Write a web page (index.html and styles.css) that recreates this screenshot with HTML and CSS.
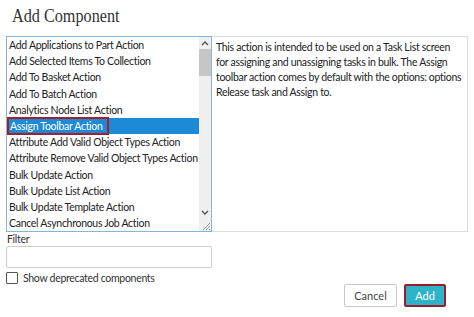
FILE: index.html
```html
<!DOCTYPE html>
<html lang="en">
<head>
    <meta charset="UTF-8">
    <meta name="viewport" content="width=device-width, initial-scale=1.0">
    <title>Add Component</title>
    <link rel="stylesheet" href="styles.css">
</head>
<body>
    <div class="dialog">
        <h1>Add Component</h1>
        <div class="picker">
            <div class="listbox">
                <ul class="items">
                    <li>Add Applications to Part Action</li>
                    <li>Add Selected Items To Collection</li>
                    <li>Add To Basket Action</li>
                    <li>Add To Batch Action</li>
                    <li>Analytics Node List Action</li>
                    <li class="selected"><span class="mark">Assign Toolbar Action</span></li>
                    <li>Attribute Add Valid Object Types Action</li>
                    <li>Attribute Remove Valid Object Types Action</li>
                    <li>Bulk Update Action</li>
                    <li>Bulk Update List Action</li>
                    <li>Bulk Update Template Action</li>
                    <li>Cancel Asynchronous Job Action</li>
                </ul>
                <div class="scrollbar">
                    <svg class="arrow" width="8" height="6" viewBox="0 0 8 6"><path d="M1 5 L4 2 L7 5" fill="none" stroke="#555" stroke-width="1.4"/></svg>
                    <div class="track"><div class="thumb"></div></div>
                    <svg class="arrow" width="8" height="6" viewBox="0 0 8 6"><path d="M1 1 L4 4 L7 1" fill="none" stroke="#555" stroke-width="1.4"/></svg>
                    <svg class="grip" width="10" height="10" viewBox="0 0 10 10"><path d="M9 2 L2 9 M9 5 L5 9 M9 8 L8 9" stroke="#999" stroke-width="1"/></svg>
                </div>
            </div>
            <div class="description">
                This action is intended to be used on a Task List screen for assigning and unassigning tasks in bulk. The Assign toolbar action comes by default with the options: options Release task and Assign to.
            </div>
        </div>
        <label class="filter-label" for="filter">Filter</label>
        <input class="filter" type="text" id="filter">
        <label class="deprecated">
            <span class="box"></span>
            Show deprecated components
        </label>
        <div class="actions">
            <button class="cancel">Cancel</button>
            <button class="add">Add</button>
        </div>
    </div>
</body>
</html>
```

FILE: styles.css
```css
body {
    margin: 0;
    padding: 0;
    background-color: #fff;
    font-family: Lato, "Open Sans", sans-serif;
    font-size: 10.5px;
    letter-spacing: -0.3px;
    color: #333;
}

.dialog {
    width: 474px;
    height: 317px;
    padding: 0 6px;
    box-sizing: border-box;
}

h1 {
    font-family: "Liberation Serif", "DejaVu Serif", serif;
    font-weight: normal;
    font-size: 18px;
    letter-spacing: 0;
    margin: 0;
    padding: 6px 0 0 6.7px;
    height: 36px;
    box-sizing: border-box;
    color: #333;
    transform: scaleX(0.9);
    transform-origin: left;
}

.picker {
    display: flex;
    height: 196px;
}

.listbox {
    width: 206px;
    box-sizing: border-box;
    border: 1px solid #86b6d6;
    display: flex;
    background: white;
}

.items {
    list-style: none;
    margin: 0;
    padding: 0;
    flex: 1;
    overflow: hidden;
}

.items li {
    height: 16.2px;
    line-height: 16px;
    padding-left: 2px;
    white-space: nowrap;
    color: #222;
}

.items li.selected {
    background-color: #1c8ad6;
    color: white;
    padding-left: 0;
}

.mark {
    display: inline-block;
    box-sizing: border-box;
    height: 18px;
    margin-top: -1px;
    line-height: 15px;
    padding: 0 4px 0 1px;
    border: 2px solid #a0202e;
}

.scrollbar {
    width: 12px;
    background: #efefef;
    display: flex;
    flex-direction: column;
    align-items: center;
}

.arrow {
    margin: 3px 0;
}

.track {
    flex: 1;
    width: 100%;
}

.thumb {
    height: 27px;
    background: #c6c6c6;
}

.grip {
    align-self: flex-end;
    margin-top: 2px;
}

.description {
    flex: 1;
    border: 1px solid #dcdcdc;
    border-left: none;
    padding: 3px 4px 0 4px;
    line-height: 15px;
    color: #222;
}

.filter-label {
    display: block;
    padding: 1px 0 0 1px;
    height: 13px;
    line-height: 13px;
    color: #333;
}

.filter {
    display: block;
    width: 206px;
    height: 22px;
    box-sizing: border-box;
    border: 1px solid #cfcfcf;
    border-radius: 2px;
    margin: 0;
}

.deprecated {
    display: flex;
    align-items: center;
    gap: 5px;
    height: 14px;
    margin: 3px 0 0 0;
    color: #333;
}

.box {
    width: 10px;
    height: 10px;
    border: 1px solid #555;
    border-radius: 1px;
}

.actions {
    display: flex;
    justify-content: flex-end;
    gap: 7px;
    margin-top: -1px;
    padding: 0 22px 0 0;
}

button {
    font-family: inherit;
    font-size: 11px;
    height: 23px;
    box-sizing: border-box;
    border-radius: 2px;
    cursor: pointer;
}

.cancel {
    width: 53px;
    background: white;
    border: 1px solid #c8c8c8;
    color: #444;
}

.add {
    width: 42px;
    background: #2db4c8;
    border: 2px solid #9b1c2a;
    color: white;
}
```
